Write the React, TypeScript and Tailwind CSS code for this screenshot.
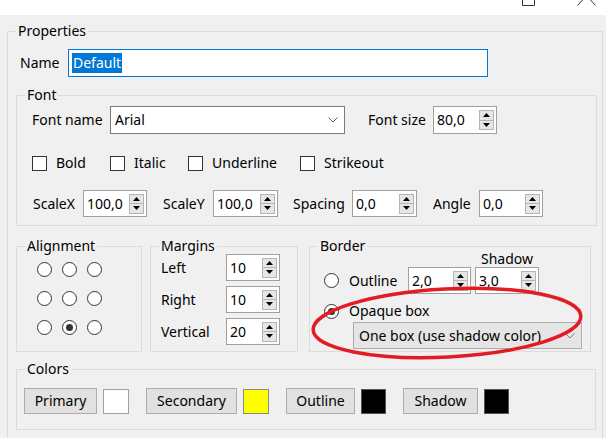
import React from "react";

type BoxProps = {
  title: string;
  className?: string;
  children?: React.ReactNode;
};

const GroupBox = ({ title, className = "", children }: BoxProps) => (
  <fieldset className={`border border-[#dcdcdc] ${className}`}>
    <legend className="ml-[8px] px-[2px] leading-[18px]">{title}</legend>
    {children}
  </fieldset>
);

const Arrow = ({ up }: { up?: boolean }) => (
  <svg width="7" height="4" viewBox="0 0 7 4">
    <path d={up ? "M0 4 L3.5 0 L7 4 Z" : "M0 0 L7 0 L3.5 4 Z"} fill="#000" />
  </svg>
);

const Spin = ({ value, className = "" }: { value: string; className?: string }) => (
  <div
    className={`flex h-[27px] items-center justify-between border border-[#a0a0a0] bg-white pl-[3px] pr-[2px] ${className}`}
  >
    <span className="leading-[18px]">{value}</span>
    <div className="flex h-[20px] w-[15px] flex-col border border-[#b4b4b4] bg-[#e6e6e6]">
      <div className="flex flex-1 items-center justify-center border-b border-[#b4b4b4]">
        <Arrow up />
      </div>
      <div className="flex flex-1 items-center justify-center">
        <Arrow />
      </div>
    </div>
  </div>
);

const Check = ({ label, className = "" }: { label: string; className?: string }) => (
  <div className={`flex items-center gap-[9px] ${className}`}>
    <span className="h-[15px] w-[15px] border border-[#333] bg-white" />
    <span className="leading-[18px]">{label}</span>
  </div>
);

const Radio = ({ checked }: { checked?: boolean }) => (
  <span className="flex h-[15px] w-[15px] items-center justify-center rounded-full border border-[#333] bg-white">
    {checked && <span className="h-[7px] w-[7px] rounded-full bg-[#333]" />}
  </span>
);

const Chevron = ({ color = "#606060" }: { color?: string }) => (
  <svg width="10" height="6" viewBox="0 0 10 6">
    <path d="M0.5 0.5 L5 5 L9.5 0.5" fill="none" stroke={color} strokeWidth="1" />
  </svg>
);

const ColorPick = ({ label, btn, swatch }: { label: string; btn: string; swatch: string }) => (
  <div className="flex items-center gap-[6px]">
    <button
      className={`flex h-[26px] items-center justify-center border border-[#adadad] bg-[#e1e1e1] leading-[18px] ${btn}`}
    >
      {label}
    </button>
    <span className={`h-[25px] border ${swatch}`} />
  </div>
);

export default function App() {
  return (
    <div className="relative h-[438px] w-[606px] overflow-hidden bg-[#f0f0f0] font-['Noto_Sans',sans-serif] text-[14px] text-black">
      {/* caption strip with clipped window buttons */}
      <div className="flex h-[15px] items-end justify-end gap-[42px] bg-white pr-[10px]">
        <svg width="13" height="6" viewBox="0 0 13 6" className="mb-[9px]">
          <path d="M0.5 0 V5.5 H12.5 V0" fill="none" stroke="#333" strokeWidth="1" />
        </svg>
        <svg width="19" height="6" viewBox="0 0 19 6" className="mb-[9px]">
          <path d="M5.5 0 L0.5 5.5 M13.5 0 L18.5 5.5" fill="none" stroke="#333" strokeWidth="1" />
        </svg>
      </div>

      <GroupBox title="Properties" className="ml-[7px] mt-[7px] h-[440px] w-[596px]">
        <div className="ml-[12px] mt-[9px] flex h-[28px] items-center">
          <span className="w-[48px] leading-[18px]">Name</span>
          <div className="flex h-[28px] w-[420px] items-center border border-[#0078d7] bg-white pl-[3px]">
            <span className="bg-[#0078d7] px-[1px] leading-[20px] text-white">Default</span>
          </div>
        </div>

        <GroupBox title="Font" className="ml-[8px] mt-[9px] w-[581px] pb-[8px]">
          <div className="mt-[2px] flex h-[28px] items-center pl-[15px]">
            <span className="w-[78px] leading-[18px]">Font name</span>
            <div className="flex h-[28px] w-[235px] items-center justify-between border border-[#7a7a7a] bg-white pl-[4px] pr-[6px]">
              <span className="leading-[18px]">Arial</span>
              <Chevron />
            </div>
            <span className="ml-[23px] w-[65px] leading-[18px]">Font size</span>
            <Spin value="80,0" className="h-[28px] w-[64px]" />
          </div>

          <div className="mt-[21px] flex h-[16px] items-center pl-[15px]">
            <Check label="Bold" className="w-[78px]" />
            <Check label="Italic" className="w-[78px]" />
            <Check label="Underline" className="w-[112px]" />
            <Check label="Strikeout" />
          </div>

          <div className="mt-[19px] flex items-center pl-[16px]">
            <span className="w-[50px] leading-[18px]">ScaleX</span>
            <Spin value="100,0" className="w-[64px]" />
            <span className="ml-[16px] w-[50px] leading-[18px]">ScaleY</span>
            <Spin value="100,0" className="w-[65px]" />
            <span className="ml-[15px] w-[59px] leading-[18px]">Spacing</span>
            <Spin value="0,0" className="w-[65px]" />
            <span className="ml-[16px] w-[46px] leading-[18px]">Angle</span>
            <Spin value="0,0" className="w-[64px]" />
          </div>
        </GroupBox>

        <div className="ml-[8px] mt-[11px] flex items-stretch">
          <GroupBox title="Alignment" className="w-[126px]">
            <div className="mt-[7px] grid w-max grid-cols-3 gap-x-[10px] gap-y-[14px] pl-[20px]">
              <Radio />
              <Radio />
              <Radio />
              <Radio />
              <Radio />
              <Radio />
              <Radio />
              <Radio checked />
              <Radio />
            </div>
          </GroupBox>

          <GroupBox title="Margins" className="ml-[8px] w-[148px]">
            <div className="mt-[-1px] flex flex-col gap-[5px] pl-[10px]">
              <div className="flex items-center">
                <span className="w-[65px] leading-[18px]">Left</span>
                <Spin value="10" className="w-[54px]" />
              </div>
              <div className="flex items-center">
                <span className="w-[65px] leading-[18px]">Right</span>
                <Spin value="10" className="w-[54px]" />
              </div>
              <div className="flex items-center">
                <span className="w-[65px] leading-[18px]">Vertical</span>
                <Spin value="20" className="w-[54px]" />
              </div>
            </div>
          </GroupBox>

          <GroupBox title="Border" className="ml-[11px] w-[282px] pb-[2px]">
            <div className="ml-[171px] mt-[-4px] leading-[16px]">Shadow</div>
            <div className="flex h-[27px] items-center pl-[14px]">
              <Radio />
              <span className="ml-[10px] w-[59px] leading-[18px]">Outline</span>
              <Spin value="2,0" className="w-[63px]" />
              <Spin value="3,0" className="ml-[4px] w-[64px]" />
            </div>
            <div className="mt-[8px] flex h-[18px] items-center pl-[14px]">
              <Radio checked />
              <span className="ml-[10px] leading-[18px]">Opaque box</span>
            </div>
            <div className="ml-[43px] mt-[2px] flex h-[27px] w-[229px] items-center justify-between border border-[#adadad] bg-[#e5e5e5] pl-[5px] pr-[6px]">
              <span className="leading-[18px]">One box (use shadow color)</span>
              <Chevron color="#808080" />
            </div>
          </GroupBox>
        </div>

        <GroupBox title="Colors" className="ml-[8px] mt-[8px] w-[580px] pb-[15px]">
          <div className="mt-[10px] flex items-center gap-[17px] pl-[7px]">
            <ColorPick label="Primary" btn="w-[73px]" swatch="w-[26px] border-[#a0a0a0] bg-white" />
            <ColorPick label="Secondary" btn="w-[91px]" swatch="w-[26px] border-[#8a8a8a] bg-[#ffff00]" />
            <ColorPick label="Outline" btn="w-[69px]" swatch="w-[25px] border-[#555] bg-black" />
            <ColorPick label="Shadow" btn="w-[75px]" swatch="w-[25px] border-[#555] bg-black" />
          </div>
        </GroupBox>
      </GroupBox>

      {/* red annotation ellipse drawn over the form */}
      <svg
        className="pointer-events-none absolute left-0 top-0"
        width="606"
        height="438"
        viewBox="0 0 606 438"
      >
        <ellipse
          cx="447"
          cy="323"
          rx="134"
          ry="34"
          transform="rotate(-3 447 323)"
          fill="none"
          stroke="#e31b23"
          strokeWidth="3.5"
        />
      </svg>
    </div>
  );
}
